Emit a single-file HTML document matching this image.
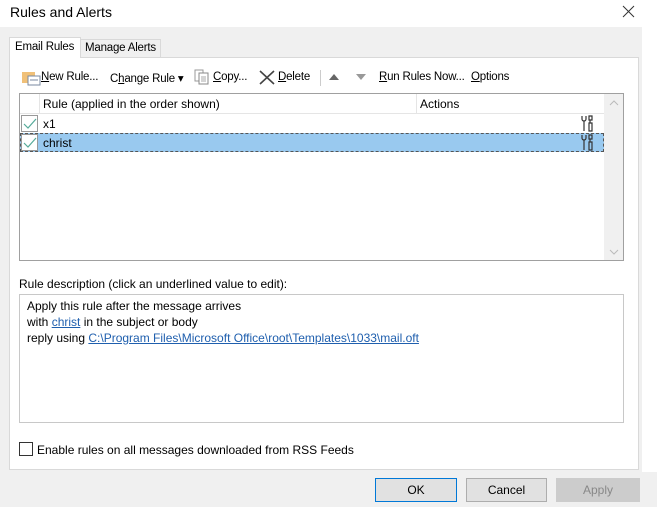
<!DOCTYPE html>
<html><head><meta charset="utf-8"><style>
*{box-sizing:border-box;margin:0;padding:0}
body{width:657px;height:507px;overflow:hidden;background:#f0f0f0;font-family:"Liberation Sans",sans-serif;font-size:12px;color:#000;position:relative}
.a{position:absolute;white-space:nowrap}
u{text-decoration:underline}
.lnk{color:#1f5fae;text-decoration:underline}
.btn{position:absolute;top:478px;height:24px;border:1px solid #adadad;background:#e1e1e1;text-align:center;line-height:22px;font-size:12px}
.tb{font-size:11.5px;letter-spacing:-0.2px}
</style></head><body>
<div class="a" style="left:0;top:0;width:657px;height:27px;background:#fff"></div>
<div class="a" style="left:642px;top:27px;width:15px;height:445px;background:#fff"></div>
<div class="a" style="left:10px;top:4px;font-size:14px">Rules and Alerts</div>
<svg class="a" style="left:622px;top:5px" width="13" height="13"><path d="M1 1L12 12M12 1L1 12" stroke="#333" stroke-width="1"/></svg>

<div class="a" style="left:9px;top:57px;width:630px;height:413px;background:#fff;border:1px solid #d9d9d9"></div>
<div class="a tb" style="left:9px;top:37px;width:72px;height:21px;background:#fff;border:1px solid #d9d9d9;border-bottom:none;padding:3px 0 0 5px">Email Rules</div>
<div class="a tb" style="left:80px;top:39px;width:81px;height:18px;background:#f0f0f0;border:1px solid #d9d9d9;border-bottom:none;padding:2px 0 0 4px">Manage Alerts</div>

<!-- toolbar -->
<svg class="a" style="left:22px;top:70px" width="20" height="16"><rect x="0" y="2" width="13" height="11" fill="#f0c078"/><rect x="6" y="6" width="12" height="9" fill="#fff" stroke="#7a8aa0"/><line x1="8" y1="10" x2="16" y2="10" stroke="#7a8aa0"/></svg>
<div class="a tb" style="left:41px;top:71px"><u>N</u>ew Rule...</div>
<div class="a tb" style="left:110px;top:71px">C<u>h</u>ange Rule ▾</div>
<svg class="a" style="left:194px;top:69px" width="16" height="16"><rect x="1" y="1" width="8" height="11" fill="#fff" stroke="#999"/><rect x="5" y="4" width="9" height="11" fill="#fff" stroke="#888"/><path d="M7 8h5M7 10h5M7 12h5" stroke="#aaa"/></svg>
<div class="a tb" style="left:213px;top:71px"><u>C</u>opy...</div>
<svg class="a" style="left:259px;top:70px" width="16" height="15"><path d="M1 1L15 14M15 1L1 14" stroke="#444" stroke-width="1.6"/></svg>
<div class="a tb" style="left:278px;top:71px"><u>D</u>elete</div>
<div class="a" style="left:320px;top:70px;width:1px;height:16px;background:#ccc"></div>
<svg class="a" style="left:329px;top:73px" width="10" height="8"><path d="M0 7L5 1L10 7Z" fill="#666"/></svg>
<svg class="a" style="left:356px;top:73px" width="10" height="8"><path d="M0 1L5 7L10 1Z" fill="#999"/></svg>
<div class="a tb" style="left:379px;top:71px"><u>R</u>un Rules Now...</div>
<div class="a tb" style="left:471px;top:71px"><u>O</u>ptions</div>

<!-- list -->
<div class="a" style="left:19px;top:93px;width:605px;height:168px;border:1px solid #a0a0a0;background:#fff"></div>
<div class="a" style="left:20px;top:94px;width:584px;height:20px;background:#fff;border-bottom:1px solid #e5e5e5"></div>
<div class="a" style="left:39px;top:94px;width:1px;height:20px;background:#e5e5e5"></div>
<div class="a" style="left:416px;top:94px;width:1px;height:20px;background:#e5e5e5"></div>
<div class="a" style="left:43px;top:97px">Rule (applied in the order shown)</div>
<div class="a" style="left:420px;top:97px">Actions</div>
<div class="a" style="left:604px;top:94px;width:19px;height:166px;background:#f0f0f0"></div>
<svg class="a" style="left:609px;top:100px" width="10" height="6"><path d="M1 5L5 1L9 5" stroke="#bbb" fill="none"/></svg>
<svg class="a" style="left:609px;top:249px" width="10" height="6"><path d="M1 1L5 5L9 1" stroke="#bbb" fill="none"/></svg>
<div class="a" style="left:20px;top:133px;width:584px;height:19px;background:#99c9ef;border:1px dashed #555"></div>
<div class="a" style="left:21px;top:115px;width:17px;height:17px;border:1px solid #999;background:#fff"></div>
<div class="a" style="left:21px;top:134px;width:17px;height:17px;border:1px solid #999;background:#fff"></div>
<svg class="a" style="left:22px;top:116px" width="16" height="36"><path d="M2 8L6 12L14 3M2 27L6 31L14 22" stroke="#5a9" fill="none" stroke-width="1.2"/></svg>
<div class="a" style="left:43px;top:117px">x1</div>
<div class="a" style="left:43px;top:136px">christ</div>
<svg class="a" style="left:580px;top:114px" width="14" height="38"><g fill="none" stroke="#333" stroke-width="1.2"><path d="M2 2v3a2 2 0 004 0V2M4 7v10M9 2h3v4h-3zM10 6v3M9 9h3v8h-3z"/><path d="M2 21v3a2 2 0 004 0V21M4 26v10M9 21h3v4h-3zM10 25v3M9 28h3v8h-3z"/></g></svg>

<div class="a" style="left:19px;top:277px">Rule description (click an underlined value to edit):</div>
<div class="a" style="left:19px;top:294px;width:605px;height:129px;border:1px solid #c8c8c8;background:#fff;padding:3px 0 0 7px;line-height:16px">
Apply this rule after the message arrives<br>with <span class="lnk">christ</span> in the subject or body<br>reply using <span class="lnk">C:\Program Files\Microsoft Office\root\Templates\1033\mail.oft</span></div>

<div class="a" style="left:19px;top:442px;width:14px;height:14px;border:1px solid #333;background:#fff"></div>
<div class="a" style="left:37px;top:443px">Enable rules on all messages downloaded from RSS Feeds</div>

<div class="btn" style="left:375px;width:82px;border:1px solid #0078d7">OK</div>
<div class="btn" style="left:466px;width:81px">Cancel</div>
<div class="btn" style="left:556px;width:84px;background:#ccc;border-color:#ccc;color:#888">Apply</div>
</body></html>
